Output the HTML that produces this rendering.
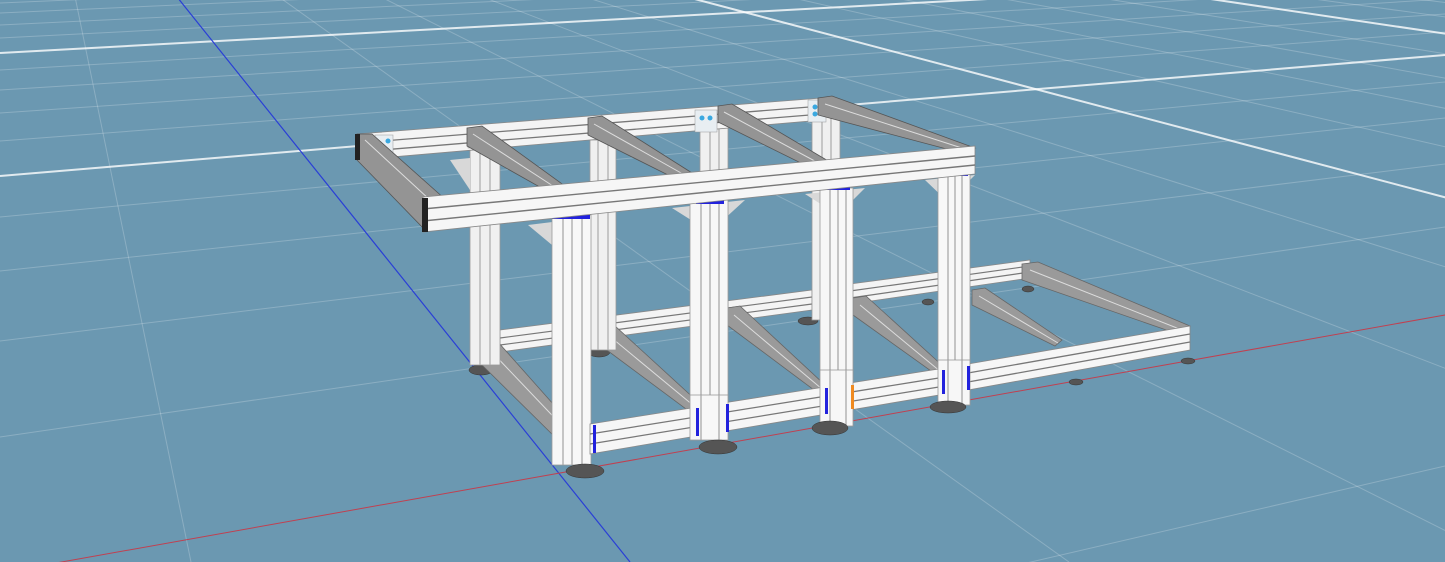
<!DOCTYPE html>
<html><head><meta charset="utf-8"><style>
html,body{margin:0;padding:0;background:#6b98b1;overflow:hidden;width:1445px;height:562px}
svg{display:block;overflow:hidden}
</style></head><body>
<svg width="1445" height="562" viewBox="0 0 1445 562" xmlns="http://www.w3.org/2000/svg">
<rect width="1445" height="562" fill="#6b98b1"/>
<g stroke="#ffffff" stroke-opacity="0.22" stroke-width="1">
<line x1="0" y1="-14" x2="1445" y2="-70"/>
<line x1="0" y1="-6" x2="1445" y2="-65"/>
<line x1="0" y1="3" x2="1445" y2="-59"/>
<line x1="0" y1="13" x2="1445" y2="-52"/>
<line x1="0" y1="25" x2="1445" y2="-44"/>
<line x1="0" y1="38" x2="1445" y2="-36"/>
<line x1="0" y1="70" x2="1445" y2="-15"/>
<line x1="0" y1="90" x2="1445" y2="-1"/>
<line x1="0" y1="113" x2="1445" y2="14"/>
<line x1="0" y1="141" x2="1445" y2="32"/>
<line x1="0" y1="217" x2="1445" y2="82"/>
<line x1="0" y1="271" x2="1445" y2="118"/>
<line x1="0" y1="341" x2="1445" y2="164"/>
<line x1="0" y1="437" x2="1445" y2="227"/>
<line x1="0" y1="801" x2="1445" y2="466"/>
<line x1="40" y1="-174" x2="191" y2="562"/>
<line x1="40" y1="-174" x2="-248" y2="562"/>
<line x1="40" y1="-174" x2="1069" y2="562"/>
<line x1="40" y1="-174" x2="1508" y2="562"/>
<line x1="40" y1="-174" x2="1947" y2="562"/>
<line x1="40" y1="-174" x2="2386" y2="562"/>
<line x1="40" y1="-174" x2="3264" y2="562"/>
<line x1="40" y1="-174" x2="3703" y2="562"/>
<line x1="40" y1="-174" x2="4142" y2="562"/>
<line x1="40" y1="-174" x2="4581" y2="562"/>
<line x1="40" y1="-174" x2="5459" y2="562"/>
<line x1="40" y1="-174" x2="5898" y2="562"/>
</g>
<g stroke="#ffffff" stroke-opacity="0.8" stroke-width="2">
<line x1="0" y1="53" x2="1445" y2="-26"/>
<line x1="0" y1="176" x2="1445" y2="55"/>
<line x1="40" y1="-174" x2="2825" y2="562"/>
<line x1="40" y1="-174" x2="5020" y2="562"/>
</g>
<line x1="40" y1="-174" x2="630" y2="562" stroke="#2a3fd6" stroke-width="1.2"/>
<line x1="0" y1="573" x2="1445" y2="315" stroke="#c04050" stroke-width="1"/>

<g fill="#555" stroke="#333" stroke-width="0.5">
<ellipse cx="481" cy="370" rx="12" ry="5"/>
<ellipse cx="599" cy="352" rx="11" ry="5"/>
<ellipse cx="808" cy="321" rx="10" ry="4"/>
<ellipse cx="928" cy="302" rx="6" ry="3"/>
<ellipse cx="1028" cy="289" rx="6" ry="3"/>
<ellipse cx="1076" cy="382" rx="7" ry="3"/>
<ellipse cx="1188" cy="361" rx="7" ry="3"/>
</g>

<g fill="#f4f4f4" stroke="#888" stroke-width="0.8">
<polygon points="500,330 812,290 812,310 500,352"/>
<polygon points="850,284 1030,260 1030,278 850,304"/>
</g>
<g stroke="#777" stroke-width="1.2">
<line x1="500" y1="338" x2="812" y2="297"/><line x1="500" y1="345" x2="812" y2="304"/>
<line x1="850" y1="291" x2="1030" y2="266"/><line x1="850" y1="298" x2="1030" y2="272"/>
</g>

<g fill="#9a9a9a" stroke="#666" stroke-width="0.8">
<polygon points="482,342 498,342 578,432 560,442 482,365"/>
<polygon points="600,327 614,325 698,402 690,412 600,345"/>
<polygon points="727,308 740,306 825,385 818,393 727,325"/>
<polygon points="853,298 866,296 945,368 938,376 853,315"/>
<polygon points="972,290 985,288 1062,340 1055,346 972,305"/>
<polygon points="1022,264 1038,262 1190,326 1175,333 1022,280"/>
</g>
<g stroke="#ddd" stroke-width="1">
<line x1="490" y1="350" x2="568" y2="432"/>
<line x1="607" y1="334" x2="694" y2="406"/>
<line x1="734" y1="315" x2="822" y2="389"/>
<line x1="860" y1="305" x2="941" y2="372"/>
<line x1="979" y1="296" x2="1058" y2="343"/>
<line x1="1030" y1="270" x2="1182" y2="330"/>
</g>

<g fill="#f0f0f0" stroke="#999" stroke-width="0.8">
<rect x="470" y="150" width="30" height="215"/>
<rect x="590" y="140" width="26" height="210"/>
<rect x="700" y="125" width="28" height="215"/>
<rect x="812" y="110" width="28" height="210"/>
</g>
<g stroke="#aaa" stroke-width="1.2">
<line x1="480" y1="150" x2="480" y2="365"/><line x1="490" y1="150" x2="490" y2="365"/>
<line x1="598" y1="140" x2="598" y2="350"/><line x1="608" y1="140" x2="608" y2="350"/>
<line x1="710" y1="125" x2="710" y2="340"/><line x1="719" y1="125" x2="719" y2="340"/>
<line x1="822" y1="110" x2="822" y2="320"/><line x1="831" y1="110" x2="831" y2="320"/>
</g>

<polygon points="357,134 822,98 822,120 357,160" fill="#f4f4f4" stroke="#888" stroke-width="0.8"/>
<line x1="357" y1="143" x2="822" y2="106" stroke="#777" stroke-width="1.3"/>
<line x1="357" y1="152" x2="822" y2="114" stroke="#777" stroke-width="1.3"/>
<g fill="#e8eef2" stroke="#999" stroke-width="0.5">
<rect x="375" y="135" width="18" height="20"/><rect x="468" y="128" width="16" height="20"/>
<rect x="695" y="110" width="22" height="22"/><rect x="808" y="100" width="18" height="22"/>
</g>
<g fill="#39a8e0"><circle cx="388" cy="141" r="2.5"/><circle cx="480" cy="134" r="2.5"/><circle cx="702" cy="118" r="2.5"/><circle cx="710" cy="118" r="2.5"/><circle cx="815" cy="107" r="2.5"/><circle cx="815" cy="114" r="2.5"/></g>
<polygon points="357,134 372,134 446,200 425,205 425,230 357,160" fill="#949494" stroke="#555" stroke-width="0.8"/>
<rect x="355" y="134" width="5" height="26" fill="#222"/>
<line x1="365" y1="140" x2="430" y2="200" stroke="#ddd" stroke-width="1"/>
<g fill="#949494" stroke="#555" stroke-width="0.8">
<polygon points="467,128 482,126 565,186 545,190 467,146"/>
<polygon points="588,118 602,116 700,178 682,182 588,135"/>
<polygon points="718,106 732,104 835,165 815,170 718,122"/>
<polygon points="818,98 832,96 975,148 958,152 818,115"/>
</g>
<g stroke="#ddd" stroke-width="1">
<line x1="473" y1="134" x2="553" y2="186"/><line x1="594" y1="124" x2="690" y2="178"/>
<line x1="724" y1="112" x2="824" y2="166"/><line x1="825" y1="104" x2="965" y2="149"/>
</g>

<g fill="#d8d8d8">
<polygon points="528,225 585,218 552,245"/>
<polygon points="672,208 745,200 710,232"/>
<polygon points="805,194 865,188 838,215"/>
<polygon points="925,180 975,175 948,202"/>
<polygon points="450,160 470,158 470,190"/>
</g>

<g fill="#f7f7f7" stroke="#999" stroke-width="0.8">
<rect x="552" y="215" width="39" height="250"/>
<rect x="690" y="200" width="38" height="240"/>
<rect x="820" y="188" width="33" height="238"/>
<rect x="938" y="172" width="32" height="233"/>
</g>
<g stroke="#a8a8a8" stroke-width="1.3">
<line x1="563" y1="215" x2="563" y2="465"/><line x1="572" y1="215" x2="572" y2="465"/><line x1="582" y1="215" x2="582" y2="465"/>
<line x1="701" y1="200" x2="701" y2="440"/><line x1="710" y1="200" x2="710" y2="440"/><line x1="719" y1="200" x2="719" y2="440"/>
<line x1="830" y1="188" x2="830" y2="426"/><line x1="838" y1="188" x2="838" y2="426"/><line x1="846" y1="188" x2="846" y2="426"/>
<line x1="948" y1="172" x2="948" y2="405"/><line x1="955" y1="172" x2="955" y2="405"/><line x1="962" y1="172" x2="962" y2="405"/>
</g>
<g fill="#2222dd">
<rect x="552" y="215" width="38" height="4"/><rect x="696" y="200" width="28" height="4"/>
<rect x="826" y="186" width="24" height="4"/><rect x="952" y="172" width="16" height="4"/>
</g>

<polygon points="423,197 975,146 975,174 423,232" fill="#f6f6f6" stroke="#888" stroke-width="0.8"/>
<line x1="423" y1="209" x2="975" y2="156" stroke="#777" stroke-width="1.4"/>
<line x1="423" y1="221" x2="975" y2="165" stroke="#777" stroke-width="1.4"/>
<rect x="422" y="198" width="6" height="34" fill="#222"/>

<polygon points="590,424 945,368 945,394 590,454" fill="#f6f6f6" stroke="#888" stroke-width="0.8"/>
<line x1="590" y1="434" x2="945" y2="377" stroke="#777" stroke-width="1.3"/>
<line x1="590" y1="444" x2="945" y2="386" stroke="#777" stroke-width="1.3"/>
<polygon points="968,364 1190,326 1190,350 968,390" fill="#f6f6f6" stroke="#888" stroke-width="0.8"/>
<line x1="968" y1="373" x2="1190" y2="334" stroke="#777" stroke-width="1.3"/>
<line x1="968" y1="382" x2="1190" y2="342" stroke="#777" stroke-width="1.3"/>
<g fill="#f7f7f7" stroke="#999" stroke-width="0.8">
<rect x="690" y="395" width="38" height="45"/>
<rect x="820" y="370" width="33" height="56"/>
<rect x="938" y="360" width="32" height="45"/>
</g>
<g stroke="#a8a8a8" stroke-width="1.3">
<line x1="701" y1="395" x2="701" y2="440"/><line x1="719" y1="395" x2="719" y2="440"/>
<line x1="830" y1="370" x2="830" y2="426"/><line x1="846" y1="370" x2="846" y2="426"/>
<line x1="948" y1="360" x2="948" y2="405"/><line x1="962" y1="360" x2="962" y2="405"/>
</g>
<g fill="#2222dd">
<rect x="593" y="425" width="3" height="28"/><rect x="696" y="408" width="3" height="28"/>
<rect x="726" y="404" width="3" height="28"/><rect x="825" y="388" width="3" height="26"/>
<rect x="942" y="370" width="3" height="24"/><rect x="967" y="366" width="3" height="24"/>
</g>
<rect x="851" y="385" width="3" height="24" fill="#f08a20"/>

<g fill="#555" stroke="#333" stroke-width="0.5">
<ellipse cx="585" cy="471" rx="19" ry="7"/>
<ellipse cx="718" cy="447" rx="19" ry="7"/>
<ellipse cx="830" cy="428" rx="18" ry="7"/>
<ellipse cx="948" cy="407" rx="18" ry="6"/>
</g>
</svg>
</body></html>
